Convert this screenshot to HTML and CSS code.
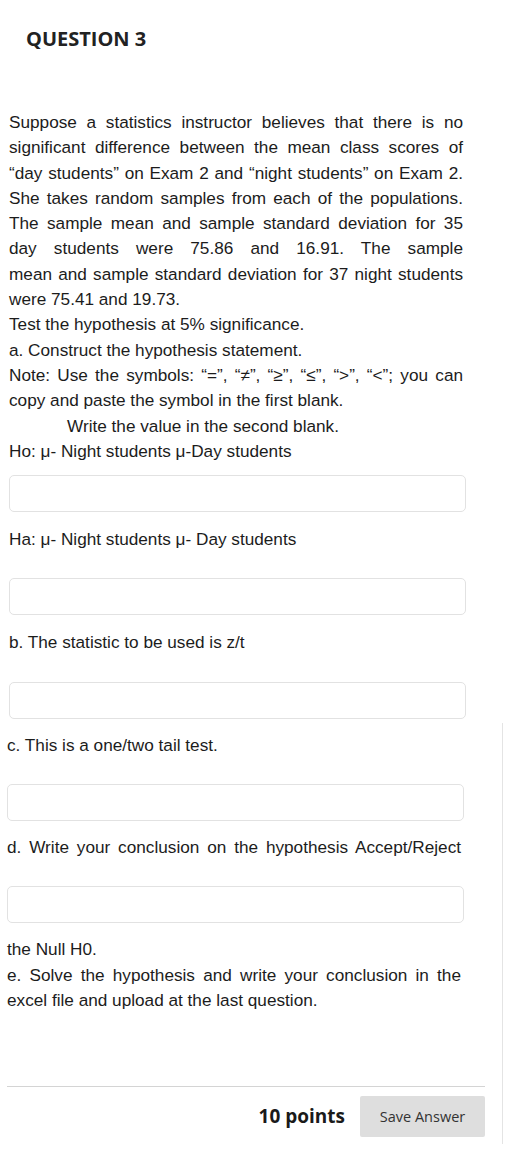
FILE: index.html
```html
<!DOCTYPE html>
<html lang="en">
    <head>
        <meta charset="UTF-8">
        <meta name="viewport" content="width=device-width, initial-scale=1.0">
        <title>Question 3</title>
        <link rel="stylesheet" href="styles.css">
    </head>
    <body>
        <div class="question">
            <h1 class="q-title">QUESTION 3</h1>

            <div class="q-body">
                <p class="just">Suppose a statistics instructor believes that there is no significant difference between the mean class scores of “day students” on Exam 2 and “night students” on Exam 2. She takes random samples from each of the populations. The sample mean and sample standard deviation for 35 day students were 75.86 and 16.91. The sample <span class="keep">mean and sample standard deviation for 37 night students</span> were 75.41 and 19.73.</p>
                <p>Test the hypothesis at 5% significance.</p>
                <p>a. Construct the hypothesis statement.</p>
                <p class="just">Note: Use the symbols: “=”, “≠”, “≥”, “≤”, “&gt;”, “&lt;”; you can copy and paste the symbol in the first blank.</p>
                <p class="indent">Write the value in the second blank.</p>
                <p>Ho: μ- Night students μ-Day students</p>
                <input type="text" class="blank blank-first">
                <p>Ha: μ- Night students μ- Day students</p>
                <input type="text" class="blank">
                <p>b. The statistic to be used is z/t</p>
                <input type="text" class="blank blank-last">
            </div>

            <div class="q-lower">
                <p>c. This is a one/two tail test.</p>
                <input type="text" class="blank">
                <p class="just-all">d. Write your conclusion on the hypothesis Accept/Reject</p>
                <input type="text" class="blank">
                <p>the Null H0.</p>
                <p class="just">e. Solve the hypothesis and write your conclusion in the excel file and upload at the last question.</p>

                <div class="q-footer">
                    <span class="points">10 points</span>
                    <button class="save-btn">Save Answer</button>
                </div>
            </div>
        </div>
    </body>
</html>
```

FILE: styles.css
```css
body {
    margin: 0;
    background-color: #fff;
    color: #1c1c1c;
    font-family: 'Liberation Sans', Arial, sans-serif;
    font-size: 17.2px;
    line-height: 25.3px;
}
p {
    margin: 0;
    width: 454px;
}
.question {
    width: 522px;
}
.q-title {
    margin: 25px 0 0 26px;
    font-family: 'Open Sans', sans-serif;
    font-size: 20px;
    font-weight: 700;
    line-height: 28px;
    color: #222;
}
.q-body {
    width: 457px;
    margin: 57px 0 0 9px;
}
.just {
    text-align: justify;
}
.just-all {
    text-align: justify;
    text-align-last: justify;
}
.keep {
    white-space: nowrap;
}
.indent {
    padding-left: 58px;
    box-sizing: border-box;
}
.blank {
    display: block;
    box-sizing: border-box;
    width: 457px;
    height: 37px;
    margin: 26px 0 15px;
    padding: 0 8px;
    border: 1px solid #e2e2e2;
    border-radius: 5px;
    background: #fff;
    font: inherit;
}
.blank-first {
    margin-top: 11px;
}
.blank-last {
    margin-bottom: 4px;
}
.q-lower {
    width: 495px;
    margin-left: 7px;
    padding: 10px 0 7px;
    border-right: 1px solid #e4e4e4;
}
.q-lower .blank {
    margin-bottom: 14px;
}
.q-footer {
    display: flex;
    justify-content: flex-end;
    align-items: center;
    gap: 15px;
    width: 478px;
    margin-top: 73px;
    padding-top: 9px;
    border-top: 1px solid #d4d4d4;
}
.points {
    font-family: 'Open Sans', sans-serif;
    font-size: 19px;
    font-weight: 700;
    color: #1a1a1a;
}
.save-btn {
    width: 125px;
    height: 41px;
    border: none;
    border-radius: 2px;
    background-color: #dedede;
    color: #333;
    font-family: 'Open Sans', sans-serif;
    font-size: 14.5px;
}
```
